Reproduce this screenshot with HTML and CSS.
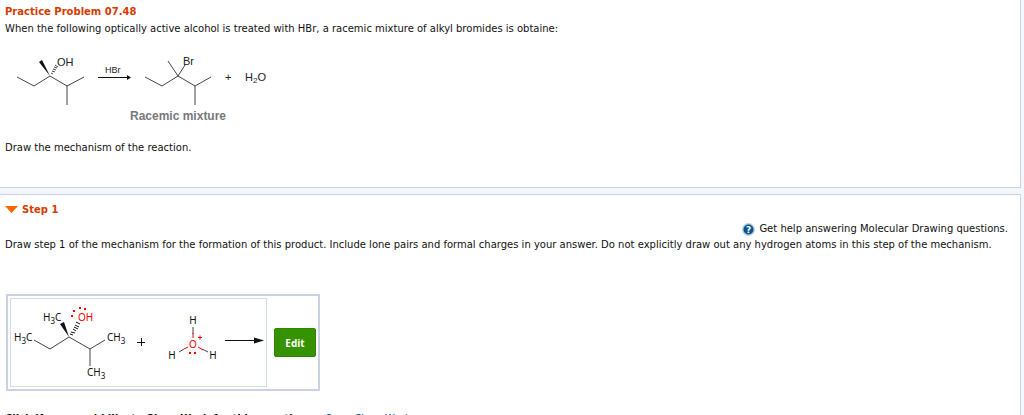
FILE: index.html
```html
<!DOCTYPE html>
<html lang="en">
<head>
    <meta charset="utf-8">
    <title>Practice Problem 07.48</title>
    <link rel="stylesheet" href="styles.css">
</head>
<body>
<div class="panel problem">
    <h1 class="title">Practice Problem 07.48</h1>
    <p class="text">When the following optically active alcohol is treated with HBr, a racemic mixture of alkyl bromides is obtaine:</p>

    <svg class="reaction" width="270" height="80" viewBox="0 0 270 80" role="img" aria-label="Reaction scheme">
        <!-- alcohol -->
        <path class="bond" d="M12 27 L29 36 L45 26 L62 36 L79 27 M62 36 V55"/>
        <path class="wedge" d="M45 26 L34 12 L37 10 Z"/>
        <path class="bond" d="M46 23 L48 24 M47 21 L50 22 M48 19 L51 20 M49 17 L52 18 M50 15 L53 17"/>
        <text class="label" x="52" y="16">OH</text>
        <text class="label small" x="100" y="23">HBr</text>
        <path class="bond dark" d="M93 27.5 H125"/>
        <path class="wedge" d="M122 25 L126 27.5 L122 30 Z"/>
        <!-- bromide -->
        <path class="bond" d="M140 27 L157 36 L173 26 L190 36 L206 27 M190 36 V55 M173 26 L163 11 M173 26 L180 15"/>
        <text class="label" x="178" y="15">Br</text>
        <text class="label" x="220" y="31">+</text>
        <text class="label" x="240" y="31">H<tspan class="sub" dy="2">2</tspan><tspan dy="-2">O</tspan></text>
        <text class="caption" x="125" y="70">Racemic mixture</text>
    </svg>

    <p class="text">Draw the mechanism of the reaction.</p>
</div>

<div class="panel step">
    <h2 class="title step-title">
        <svg class="arrow" width="13" height="7" viewBox="0 0 13 7"><path d="M0 0 H13 L6.5 7 Z"/></svg>Step 1
    </h2>
    <p class="text help">
        <svg class="help-icon" width="13" height="13" viewBox="0 0 13 13">
            <circle class="halo" cx="6.5" cy="6.5" r="6.5"/>
            <circle class="disc" cx="6.5" cy="6.5" r="5"/>
            <text x="6.5" y="10" text-anchor="middle">?</text>
        </svg>Get help answering Molecular Drawing questions.
    </p>
    <p class="text">Draw step 1 of the mechanism for the formation of this product. Include lone pairs and formal charges in your answer. Do not explicitly draw out any hydrogen atoms in this step of the mechanism.</p>

    <div class="editor">
        <div class="canvas">
            <svg width="255" height="87" viewBox="0 0 255 87" role="img" aria-label="Molecular drawing">
                <!-- alcohol -->
                <path class="bond" d="M23 41 L39 50 L58 38 L79 50 L94 41 M79 50 V67"/>
                <path class="wedge" d="M58 38 L49 25 L53 23 Z"/>
                <path class="bond dark" d="M59 35 L62 36 M60 33 L64 34 M62 30 L65 32 M63 28 L67 30 M64 26 L68 28 M65 23 L69 25"/>
                <text class="atom" x="32" y="22">H<tspan class="sub" dy="3">3</tspan><tspan dy="-3">C</tspan></text>
                <text class="atom" x="3" y="42">H<tspan class="sub" dy="3">3</tspan><tspan dy="-3">C</tspan></text>
                <text class="atom" x="96" y="42">CH<tspan class="sub" dy="3">3</tspan></text>
                <text class="atom" x="76" y="77">CH<tspan class="sub" dy="3">3</tspan></text>
                <text class="atom red" x="67" y="22">OH</text>
                <path class="dots" d="M60 16 h2 v2 h-2 z M62 11 h2 v2 h-2 z M68 8 h2 v2 h-2 z M73 9 h2 v2 h-2 z"/>
                <path class="bond dark" d="M126 43.5 H134 M130.5 39 V47"/>
                <!-- hydronium -->
                <path class="bond" d="M182 28 V35 M168 53 L173 50 M191 50 L197 53"/>
                <path class="bond red-bond" d="M182 34 V39 M173 50 L177 48 M187 48 L192 51"/>
                <text class="atom" x="182" y="25" text-anchor="middle">H</text>
                <text class="atom" x="161" y="60" text-anchor="middle">H</text>
                <text class="atom" x="202" y="60" text-anchor="middle">H</text>
                <text class="atom red" x="182" y="49" text-anchor="middle">O</text>
                <path class="bond red-bond" d="M187 38.5 H191 M189 36.5 V40.5"/>
                <path class="dots" d="M178 53 h2 v2 h-2 z M183 53 h2 v2 h-2 z"/>
                <path class="bond dark" d="M214 41.5 H245"/>
                <path class="wedge" d="M243 38.5 L253 41.5 L243 44.5 Z"/>
            </svg>
        </div>
        <button class="edit" type="button">Edit</button>
    </div>

    <p class="text show-work">Click if you would like to Show Work for this question: <a href="#work">Open Show Work</a></p>
</div>
</body>
</html>
```

FILE: styles.css
```css
body {
    margin: 0;
    background-color: #f3f7fa;
    font-family: Verdana, "DejaVu Sans", sans-serif;
    font-size: 10px;
    color: #111;
    overflow: hidden;
}

.panel {
    margin-right: 3px;
    padding: 4px 5px 0;
    border: 1px solid #cbd3e2;
    border-left: none;
    background-color: #fff;
}

.problem {
    border-top: none;
    padding-bottom: 31px;
}

.step {
    margin-top: 6px;
    padding-top: 7px;
}

.title {
    margin: 0;
    font-size: 10px;
    line-height: 15px;
    color: #d63b00;
}

.text {
    margin: 0;
    line-height: 16px;
}

.problem .text {
    margin-top: 2px;
}

.reaction {
    display: block;
    margin: 13px 0 10px;
}

.bond {
    fill: none;
    stroke: #444;
    stroke-width: 1;
}

.dark {
    stroke: #111;
}

.wedge {
    fill: #111;
}

.label {
    font-family: Arial, "Liberation Sans", sans-serif;
    font-size: 11px;
    fill: #222;
}

.small {
    font-size: 9px;
}

.caption {
    font-family: Arial, "Liberation Sans", sans-serif;
    font-size: 12px;
    font-weight: bold;
    fill: #77787b;
}

.sub {
    font-size: 8px;
}

.arrow {
    margin-right: 4px;
    fill: #ff6600;
}

.help {
    display: flex;
    justify-content: flex-end;
    align-items: center;
    margin-top: 4px;
    padding-right: 7px;
}

.help-icon {
    margin-right: 4px;
}

.help-icon text {
    font-size: 9px;
    font-weight: bold;
    fill: #fff;
}

.halo {
    fill: #b9d0e0;
}

.disc {
    fill: #07538b;
}

.editor {
    display: flex;
    align-items: center;
    width: fit-content;
    margin: 41px 0 20px 1px;
    padding: 2px;
    border: 2px solid #cbd3e2;
}

.canvas {
    border: 1px solid #d5dbe6;
}

.canvas svg {
    display: block;
}

.atom {
    font-family: "Noto Sans", sans-serif;
    font-size: 10px;
    fill: #111;
}

.atom .sub {
    font-size: 8px;
}

.red {
    fill: #f00;
}

.red-bond {
    stroke: #f00;
}

.dots {
    fill: #f00;
}

.edit {
    width: 42px;
    height: 29px;
    margin-left: 7px;
    padding: 0;
    border: 1px solid #2f8500;
    border-radius: 2px;
    background-color: #359200;
    color: #fff;
    font-family: "Open Sans", sans-serif;
    font-size: 10px;
    font-weight: bold;
}

.show-work {
    font-weight: bold;
}

.show-work a {
    margin-left: 11px;
    color: #07538b;
    font-weight: normal;
    text-decoration: none;
}
```
